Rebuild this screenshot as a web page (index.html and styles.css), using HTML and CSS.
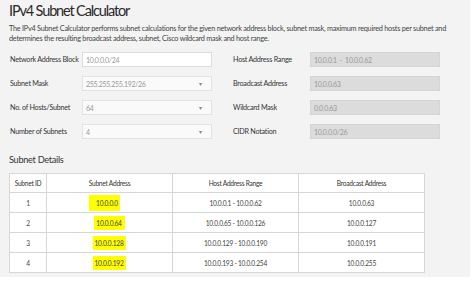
FILE: index.html
```html
<!DOCTYPE html>
<html>
<head>
<meta charset="utf-8">
<link rel="stylesheet" href="styles.css">
</head>
<body>
<div class="panel">
  <h1 class="title">IPv4 Subnet Calculator</h1>
  <p class="desc">The IPv4 Subnet Calculator performs subnet calculations for the given network address block, subnet mask, maximum required hosts per subnet and determines the resulting broadcast address, subnet, Cisco wildcard mask and host range.</p>
  <div class="form">
    <label class="lbl">Network Address Block</label>
    <div class="field input">10.0.0.0/24</div>
    <label class="lbl lbl-r">Host Address Range</label>
    <div class="field out">10.0.0.1 &nbsp;- &nbsp;10.0.0.62</div>

    <label class="lbl">Subnet Mask</label>
    <div class="field select"><span>255.255.255.192/26</span><span class="arrow">▾</span></div>
    <label class="lbl lbl-r">Broadcast Address</label>
    <div class="field out">10.0.0.63</div>

    <label class="lbl">No. of Hosts/Subnet</label>
    <div class="field select"><span>64</span><span class="arrow">▾</span></div>
    <label class="lbl lbl-r">Wildcard Mask</label>
    <div class="field out">0.0.0.63</div>

    <label class="lbl">Number of Subnets</label>
    <div class="field select"><span>4</span><span class="arrow">▾</span></div>
    <label class="lbl lbl-r">CIDR Notation</label>
    <div class="field out">10.0.0.0/26</div>
  </div>
  <h2 class="sub">Subnet Details</h2>
  <table class="tbl">
    <thead>
      <tr><th class="c1">Subnet ID</th><th class="c2">Subnet Address</th><th class="c3">Host Address Range</th><th class="c4">Broadcast Address</th></tr>
    </thead>
    <tbody>
      <tr><td>1</td><td><span class="hl hl-1">10.0.0.0</span></td><td>10.0.0.1 - 10.0.0.62</td><td>10.0.0.63</td></tr>
      <tr><td>2</td><td><span class="hl">10.0.0.64</span></td><td>10.0.0.65 - 10.0.0.126</td><td>10.0.0.127</td></tr>
      <tr><td>3</td><td><span class="hl">10.0.0.128</span></td><td>10.0.0.129 - 10.0.0.190</td><td>10.0.0.191</td></tr>
      <tr><td>4</td><td><span class="hl">10.0.0.192</span></td><td>10.0.0.193 - 10.0.0.254</td><td>10.0.0.255</td></tr>
    </tbody>
  </table>
</div>
</body>
</html>
```
FILE: styles.css
```css
* { box-sizing: border-box; }
html, body { margin: 0; padding: 0; background: #ffffff; }
body { font-family: Lato, "Open Sans", sans-serif; color: #333; }
.panel {
  width: 470px;
  height: 277px;
  background: #f3f3f3;
  padding: 0 0 0 9px;
  overflow: hidden;
}
.title {
  margin: 0;
  padding-top: 1px;
  font-size: 14.5px;
  line-height: 19px;
  font-weight: 400;
  letter-spacing: -1.15px;
  color: #2a2a2a;
}
.desc {
  margin: 4px 0 0 0;
  font-size: 7.3px;
  line-height: 10px;
  letter-spacing: -0.25px;
  color: #444;
  width: 462px;
}
.form {
  margin-top: 8px;
  display: grid;
  grid-template-columns: 73px 130px 98px 130px;
  grid-auto-rows: 15px;
  row-gap: 9px;
  align-items: center;
}
.lbl {
  font-size: 7.2px;
  letter-spacing: -0.25px;
  color: #333;
  padding-left: 1px;
  white-space: nowrap;
}
.lbl-r { padding-left: 21px; }
.field {
  height: 15px;
  font-size: 7px;
  letter-spacing: -0.3px;
  color: #999;
  display: flex;
  align-items: center;
  padding-left: 3px;
}
.input { background: #fff; border: 1px solid #dcdcdc; }
.select { background: #fafafa; border: 1px solid #e2e2e2; justify-content: space-between; padding-right: 9px; }
.arrow { font-size: 6px; color: #888; }
.out { background: #dcdcdc; border: 1px solid #d5d5d5; }
.sub {
  margin: 15px 0 0 0;
  font-size: 9.2px;
  line-height: 12px;
  letter-spacing: -0.3px;
  font-weight: 400;
  color: #333;
}
.tbl {
  margin-top: 7px;
  border-collapse: collapse;
  background: #fff;
  table-layout: fixed;
  width: 415px;
  font-size: 6.6px;
  letter-spacing: -0.25px;
  color: #444;
}
.tbl th, .tbl td {
  border: 1px solid #d7d7d7;
  text-align: center;
  font-weight: 400;
  padding: 0;
}
.tbl th { height: 19px; color: #333; }
.tbl td { height: 20px; }
.c1 { width: 37px; }
.c2 { width: 126px; }
.c3 { width: 126px; }
.c4 { width: 126px; }
.hl { background: #ffff00; padding: 3px 3px 3px 2px; }
.hl-1 { padding: 4px 2px 4px 7px; margin-left: -10px; }
```
